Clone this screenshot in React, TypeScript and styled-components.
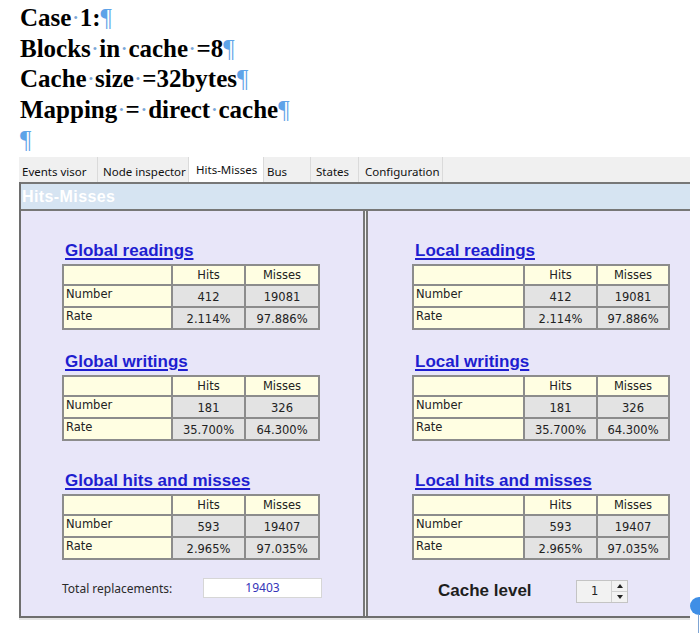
import styled, { createGlobalStyle } from "styled-components";

const GlobalStyle = createGlobalStyle`
  body {
    margin: 0;
    background: #ffffff;
  }
`;

const Page = styled.div`
  position: relative;
  width: 700px;
  height: 633px;
  overflow: hidden;
  background: #ffffff;
`;

/* ---------- word document lines ---------- */

const Doc = styled.div`
  padding: 3px 0 1.5px 20px;
  font-family: "Liberation Serif", "Times New Roman", serif;
  font-weight: 700;
  font-size: 25px;
  line-height: 30.5px;
  color: #000;
`;

const Line = styled.div`
  white-space: nowrap;
`;

const Dot = styled.span`
  color: #7aa6d6;
  font-weight: 400;
`;

const Pilcrow = styled.span`
  color: #5ea3e8;
  font-weight: 400;
`;

function DocLine({ text }: { text: string }) {
  const words = text ? text.split(" ") : [];
  return (
    <Line>
      {words.map((w, i) => (
        <span key={i}>
          {i > 0 && <Dot>·</Dot>}
          {w}
        </span>
      ))}
      <Pilcrow>¶</Pilcrow>
    </Line>
  );
}

/* ---------- simulator window ---------- */

const Window = styled.div`
  margin-left: 19px;
  width: 671px;
`;

const TabStrip = styled.div`
  display: flex;
  height: 25px;
  background: #f0f0f0;
  padding-left: 1px;
`;

const Tab = styled.div<{ $w: number; $pad: number; $active?: boolean }>`
  box-sizing: border-box;
  width: ${(p) => p.$w}px;
  padding-left: ${(p) => p.$pad}px;
  padding-top: ${(p) => (p.$active ? 0 : 2)}px;
  background: ${(p) => (p.$active ? "#ffffff" : "#f0f0f0")};
  border-right: 1px solid #dadada;
  font-family: "Noto Sans", "Open Sans", sans-serif;
  font-size: 11.5px;
  line-height: 25px;
  color: #111;
  white-space: nowrap;
`;

const Body = styled.div`
  border-left: 2px solid #6e6e6e;
  border-bottom: 2px solid #6e6e6e;
  box-shadow: 0 2px 0 #e4e4e4;
`;

const Caption = styled.div`
  height: 25px;
  padding-left: 1px;
  border-top: 2px solid #777;
  border-bottom: 2px solid #777;
  background: #d6e4f2;
  color: #ffffff;
  font-family: "Liberation Sans", Arial, sans-serif;
  font-weight: 700;
  font-size: 16px;
  letter-spacing: 0.4px;
  line-height: 25px;
`;

const Panels = styled.div`
  display: grid;
  grid-template-columns: 344px 324px;
  column-gap: 1px;
  height: 405px;
  background: #f2f2f2;
`;

const Panel = styled.div<{ $side: "left" | "right" }>`
  display: flex;
  flex-direction: column;
  padding: 31px 0 0 ${(p) => (p.$side === "left" ? 41 : 44)}px;
  background: #e8e6f9;
  border-left: ${(p) => (p.$side === "right" ? "2px solid #777" : "none")};
  border-right: ${(p) => (p.$side === "left" ? "2px solid #777" : "none")};
`;

const Section = styled.div<{ $gap: number }>`
  margin-top: ${(p) => p.$gap}px;
`;

const Title = styled.div`
  margin: 0 0 4px 3px;
  height: 18px;
  font-family: "Liberation Sans", Arial, sans-serif;
  font-weight: 700;
  font-size: 17px;
  line-height: 18px;
  color: #1e1ed0;
  text-decoration: underline;
  text-decoration-thickness: 2px;
  text-underline-offset: 2px;
  white-space: nowrap;
`;

const Grid = styled.div<{ $cols: string }>`
  display: grid;
  grid-template-columns: ${(p) => p.$cols};
  grid-template-rows: 18px 20px 20px;
  gap: 2px;
  padding: 2px;
  width: max-content;
  background: #8c8c8c;
  font-family: "DejaVu Sans", Verdana, sans-serif;
  font-size: 11.5px;
  color: #222;
`;

const Cell = styled.div<{ $kind: "label" | "head" | "value" }>`
  background: ${(p) => (p.$kind === "value" ? "#e3e3e3" : "#fffee2")};
  text-align: ${(p) => (p.$kind === "label" ? "left" : "center")};
  padding: ${(p) => (p.$kind === "value" ? "4px 0 0 0" : p.$kind === "label" ? "1px 0 0 2px" : "2px 0 0 0")};
  box-sizing: border-box;
  line-height: 14px;
  white-space: nowrap;
`;

type Stat = {
  title: string;
  hits: string;
  misses: string;
  hitRate: string;
  missRate: string;
  gap: number;
};

function StatTable({ stat, cols }: { stat: Stat; cols: string }) {
  return (
    <Section $gap={stat.gap}>
      <Title>{stat.title}</Title>
      <Grid $cols={cols}>
        <Cell $kind="label" />
        <Cell $kind="head">Hits</Cell>
        <Cell $kind="head">Misses</Cell>
        <Cell $kind="label">Number</Cell>
        <Cell $kind="value">{stat.hits}</Cell>
        <Cell $kind="value">{stat.misses}</Cell>
        <Cell $kind="label">Rate</Cell>
        <Cell $kind="value">{stat.hitRate}</Cell>
        <Cell $kind="value">{stat.missRate}</Cell>
      </Grid>
    </Section>
  );
}

const Footer = styled.div<{ $indent: number }>`
  display: flex;
  align-items: center;
  margin-top: 18px;
  padding-left: ${(p) => p.$indent}px;
`;

const FooterLabel = styled.div`
  width: 141px;
  font-family: "Noto Sans", "Open Sans", sans-serif;
  font-size: 12px;
  color: #2a2a2a;
`;

const ValueBox = styled.div`
  box-sizing: border-box;
  width: 119px;
  height: 20px;
  background: #ffffff;
  border: 1px solid #d6d6d6;
  text-align: center;
  font-family: "Noto Sans", "Open Sans", sans-serif;
  font-size: 12px;
  line-height: 18px;
  color: #3434b8;
`;

const LevelLabel = styled.div`
  width: 138px;
  font-family: "Liberation Sans", Arial, sans-serif;
  font-weight: 700;
  font-size: 17px;
  color: #1e1e1e;
`;

const Spinner = styled.div`
  box-sizing: border-box;
  display: flex;
  width: 52px;
  height: 23px;
  margin-top: 2px;
  background: #f2f2f2;
  border: 1px solid #c4c4c4;
`;

const SpinValue = styled.div`
  flex: 1;
  padding-left: 14px;
  font-family: "DejaVu Sans", Verdana, sans-serif;
  font-size: 11.5px;
  line-height: 21px;
  color: #222;
`;

const SpinButtons = styled.div`
  display: flex;
  flex-direction: column;
  width: 15px;
  border-left: 1px solid #d0d0d0;
`;

const SpinButton = styled.div<{ $dir: "up" | "down" }>`
  flex: 1;
  display: flex;
  align-items: center;
  justify-content: center;
  border-top: ${(p) => (p.$dir === "down" ? "1px solid #d0d0d0" : "none")};

  &::after {
    content: "";
    border-left: 3.5px solid transparent;
    border-right: 3.5px solid transparent;
    ${(p) =>
      p.$dir === "up"
        ? "border-bottom: 4px solid #222;"
        : "border-top: 4px solid #222;"}
  }
`;

/* selection handle lying over the page edge */
const Handle = styled.div`
  position: absolute;
  left: 690px;
  top: 597px;
  width: 18px;
  height: 18px;
  border-radius: 50%;
  background: #3f8fe6;

  &::after {
    content: "";
    position: absolute;
    left: 8px;
    top: 17px;
    width: 1px;
    height: 30px;
    background: #7fa5d4;
  }
`;

const tabs = [
  { label: "Events visor", w: 78, pad: 2 },
  { label: "Node inspector", w: 91, pad: 5 },
  { label: "Hits-Misses", w: 75, pad: 7, active: true },
  { label: "Bus", w: 47, pad: 3 },
  { label: "States", w: 48, pad: 5 },
  { label: "Configuration", w: 84, pad: 6 },
];

const globalStats: Stat[] = [
  { title: "Global readings", hits: "412", misses: "19081", hitRate: "2.114%", missRate: "97.886%", gap: 0 },
  { title: "Global writings", hits: "181", misses: "326", hitRate: "35.700%", missRate: "64.300%", gap: 23 },
  { title: "Global hits and misses", hits: "593", misses: "19407", hitRate: "2.965%", missRate: "97.035%", gap: 31 },
];

const localStats: Stat[] = globalStats.map((s) => ({
  ...s,
  title: s.title.replace("Global", "Local"),
}));

export default function App() {
  return (
    <Page>
      <GlobalStyle />
      <Doc>
        <DocLine text="Case 1:" />
        <DocLine text="Blocks in cache =8" />
        <DocLine text="Cache size =32bytes" />
        <DocLine text="Mapping = direct cache" />
        <DocLine text="" />
      </Doc>
      <Window>
        <TabStrip>
          {tabs.map((t) => (
            <Tab key={t.label} $w={t.w} $pad={t.pad} $active={t.active}>
              {t.label}
            </Tab>
          ))}
        </TabStrip>
        <Body>
          <Caption>Hits-Misses</Caption>
          <Panels>
            <Panel $side="left">
              {globalStats.map((s) => (
                <StatTable key={s.title} stat={s} cols="107px 71px 72px" />
              ))}
              <Footer $indent={0}>
                <FooterLabel>Total replacements:</FooterLabel>
                <ValueBox>19403</ValueBox>
              </Footer>
            </Panel>
            <Panel $side="right">
              {localStats.map((s) => (
                <StatTable key={s.title} stat={s} cols="109px 71px 70px" />
              ))}
              <Footer $indent={26}>
                <LevelLabel>Cache level</LevelLabel>
                <Spinner>
                  <SpinValue>1</SpinValue>
                  <SpinButtons>
                    <SpinButton $dir="up" />
                    <SpinButton $dir="down" />
                  </SpinButtons>
                </Spinner>
              </Footer>
            </Panel>
          </Panels>
        </Body>
      </Window>
      <Handle />
    </Page>
  );
}
